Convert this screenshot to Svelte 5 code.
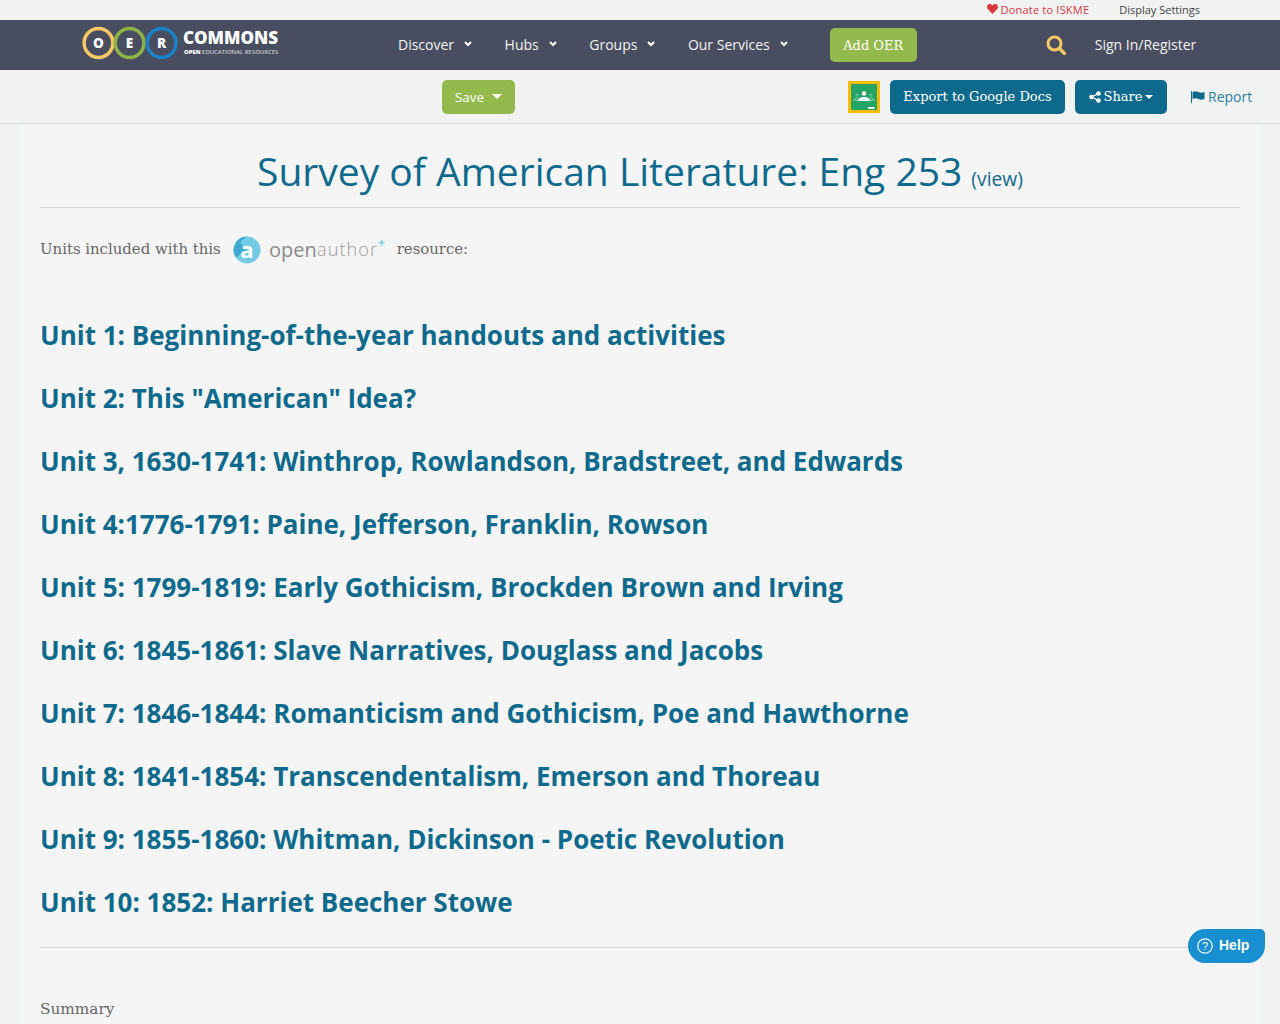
<script>
  const navItems = ["Discover", "Hubs", "Groups", "Our Services"];
  const units = [
    'Unit 1: Beginning-of-the-year handouts and activities',
    'Unit 2: This "American" Idea?',
    'Unit 3, 1630-1741: Winthrop, Rowlandson, Bradstreet, and Edwards',
    'Unit 4:1776-1791: Paine, Jefferson, Franklin, Rowson',
    'Unit 5: 1799-1819: Early Gothicism, Brockden Brown and Irving',
    'Unit 6: 1845-1861: Slave Narratives, Douglass and Jacobs',
    'Unit 7: 1846-1844: Romanticism and Gothicism, Poe and Hawthorne',
    'Unit 8: 1841-1854: Transcendentalism, Emerson and Thoreau',
    'Unit 9: 1855-1860: Whitman, Dickinson - Poetic Revolution',
    'Unit 10: 1852: Harriet Beecher Stowe'
  ];
  const rings = [
    { x: 18, color: "#f7c964", letter: "O" },
    { x: 50, color: "#8fb445", letter: "E" },
    { x: 83, color: "#1b82c5", letter: "R" }
  ];
</script>

<div class="topbar">
  <a class="donate" href="#donate">
    <svg viewBox="0 0 24 22" width="11" height="10"><path fill="#d9363e" d="M12 22 2 11.500C-1 8.300-.5 3.500 2.600 1.300 5.700-.8 9.800.2 12 3.500 14.200.2 18.300-.8 21.400 1.300c3.100 2.200 3.600 7 .6 10.200z" /></svg>
    Donate to ISKME
  </a>
  <a class="display" href="#display">Display Settings</a>
</div>

<header class="nav">
  <a class="logo" href="#home" aria-label="OER Commons">
    <svg width="210" height="36" viewBox="0 0 210 36">
      {#each rings as ring}
        <circle cx={ring.x} cy="18" r="14.800" fill="#484e60" stroke={ring.color} stroke-width="3.600" />
        <text x={ring.x} y="23" text-anchor="middle" class="ring-letter">{ring.letter}</text>
      {/each}
      <text x="105" y="19" class="logo-title">COMMONS</text>
      <text x="106" y="29" class="logo-sub"><tspan class="logo-open">OPEN</tspan> EDUCATIONAL RESOURCES</text>
    </svg>
  </a>
  <nav class="menu">
    {#each navItems as item}
      <a href="#menu">
        {item}
        <svg width="8" height="6" viewBox="0 0 8 6"><path d="M1 1l3 3 3-3" fill="none" stroke="#fff" stroke-width="2" /></svg>
      </a>
    {/each}
  </nav>
  <a class="btn add" href="#add">Add OER</a>
  <svg class="search" width="20" height="20" viewBox="0 0 20 20">
    <circle cx="8.500" cy="8.500" r="6.500" fill="none" stroke="#f7c964" stroke-width="3" />
    <path d="M13.500 13.500 18.500 18.500" stroke="#f7c964" stroke-width="3.400" stroke-linecap="round" />
  </svg>
  <a class="signin" href="#signin">Sign In/Register</a>
</header>

<div class="toolbar">
  <a class="btn save" href="#save">Save <span class="caret"></span></a>
  <a class="classroom" href="#classroom" aria-label="Google Classroom">
    <svg width="26" height="26" viewBox="0 0 26 26">
      <rect width="26" height="26" fill="#22a565" />
      <circle cx="6" cy="11" r="1.700" fill="#57bb8a" />
      <circle cx="20" cy="11" r="1.700" fill="#57bb8a" />
      <path d="M1.500 17c.5-2.500 2.500-3.500 4.500-3.500h14c2 0 4 1 4.500 3.500z" fill="#57bb8a" />
      <circle cx="13" cy="9.500" r="2.300" fill="#fff" />
      <path d="M7 17c.4-2.800 3-4 6-4s5.600 1.200 6 4z" fill="#fff" />
      <rect x="17" y="23" width="6.500" height="1.800" fill="#fff" />
    </svg>
  </a>
  <a class="btn dark export" href="#export">Export to Google Docs</a>
  <a class="btn dark share" href="#share">
    <svg width="12" height="12" viewBox="0 0 12 12" fill="#fff">
      <circle cx="2.500" cy="6" r="2.300" /><circle cx="9.500" cy="2.500" r="2.300" /><circle cx="9.500" cy="9.500" r="2.300" />
      <path d="M2.500 6 9.500 2.500M2.500 6l7 3.500" stroke="#fff" stroke-width="1.300" />
    </svg>
    Share <span class="caret small"></span>
  </a>
  <a class="report" href="#report">
    <svg width="14" height="12" viewBox="0 0 14 12"><path d="M.5 0v12" stroke="#0e6a8c" stroke-width="1" /><path fill="#0e6a8c" d="M1.500 1C4 0 5.500 0 7.500 1s3.500.8 6 0v7c-2.500 1-4 1-6 0s-3.500-.8-6 0z" /></svg>
    Report
  </a>
</div>

<main class="page">
  <div class="title">
    <h1>Survey of American Literature: Eng 253</h1>
    <a href="#view">(view)</a>
  </div>

  <div class="included">
    <span>Units included with this</span>
    <svg class="oa" width="152" height="32" viewBox="0 0 152 32">
      <circle cx="14" cy="16" r="13.500" fill="#74cbe4" />
      <path d="M14 2.500A13.500 13.500 0 0 0 3 23.500L13 16 7 8z" fill="#3fa9cf" />
      <text x="14" y="24" text-anchor="middle" class="oa-a">a</text>
      <text x="36" y="23" class="oa-open">open</text>
      <text x="84" y="22" textLength="60" lengthAdjust="spacing" class="oa-author">author</text>
      <text x="145" y="13" class="oa-plus">+</text>
    </svg>
    <span>resource:</span>
  </div>

  <ul class="units">
    {#each units as unit}
      <li><a href="#unit">{unit}</a></li>
    {/each}
  </ul>

  <h2 class="summary">Summary</h2>
</main>

<a class="help" href="#help">
  <svg width="16" height="16" viewBox="0 0 16 16">
    <circle cx="8" cy="8" r="7.200" fill="none" stroke="#fff" stroke-width="1.200" />
    <text x="8" y="12" text-anchor="middle" class="help-q">?</text>
  </svg>
  <span>Help</span>
</a>

<style>
  :global(body) {
    background: #f1f3f2;
    font-family: "Open Sans", sans-serif;
    overflow: hidden;
    height: 1024px;
  }

  a {
    text-decoration: none;
  }

  .topbar {
    height: 20px;
    box-sizing: border-box;
    padding-bottom: 2px;
    display: flex;
    justify-content: flex-end;
    align-items: center;
    gap: 30px;
    padding-right: 80px;
    font-size: 11px;
  }

  .donate {
    color: #d9363e;
    display: flex;
    align-items: center;
    gap: 3px;
    letter-spacing: 0.2px;
  }

  .display {
    color: #444;
  }

  .nav {
    height: 50px;
    background: #484e60;
    display: flex;
    align-items: center;
    padding-left: 81px;
    color: #fff;
  }

  .logo {
    display: flex;
    width: 204px;
    margin-bottom: 5px;
  }

  .ring-letter {
    font: 800 14px "Open Sans", sans-serif;
    fill: #fff;
  }

  .logo-title {
    font: 800 17.500px "Open Sans", sans-serif;
    fill: #fff;
  }

  .logo-sub {
    font: 600 6.100px "Open Sans", sans-serif;
    fill: #c8cbd3;
  }

  .logo-open {
    font-weight: 800;
    fill: #fff;
  }

  .menu {
    display: flex;
    gap: 32.500px;
    margin-left: 113px;
    padding-bottom: 2px;
    font-size: 14px;
  }

  .menu a {
    color: #f4f4f4;
    display: flex;
    align-items: center;
    gap: 10px;
  }

  .btn {
    display: flex;
    align-items: center;
    justify-content: center;
    height: 34px;
    border-radius: 5px;
    color: #fff;
    font-family: "DejaVu Serif", serif;
    font-size: 13px;
    box-sizing: border-box;
  }

  .add {
    background: #94ba4d;
    width: 87px;
    margin-left: 42px;
    font-size: 13px;
  }

  .search {
    margin-left: 129px;
  }

  .signin {
    color: #f4f4f4;
    font-size: 14px;
    margin-left: 29px;
    padding-bottom: 2px;
  }

  .toolbar {
    height: 53px;
    border-bottom: 1px solid #d8d8d8;
    display: flex;
    align-items: center;
    padding-left: 442px;
    box-sizing: content-box;
  }

  .save {
    background: #94ba4d;
    width: 73px;
    gap: 8px;
    font-family: "Open Sans", sans-serif;
    font-size: 13.500px;
  }

  .caret {
    width: 0;
    height: 0;
    border: 5px solid transparent;
    border-top-color: #fff;
    border-bottom: 0;
  }

  .caret.small {
    border-width: 4px;
    border-bottom: 0;
  }

  .classroom {
    display: flex;
    border: 3px solid #fbbc04;
    margin-left: 333px;
  }

  .dark {
    background: #0e6a8c;
  }

  .export {
    width: 175px;
    margin-left: 10px;
    font-size: 13px;
  }

  .share {
    width: 92px;
    margin-left: 10px;
    gap: 3px;
    font-size: 13px;
  }

  .report {
    margin-left: 24px;
    color: #2f7f9d;
    font-size: 14px;
    display: flex;
    align-items: center;
    gap: 3px;
  }

  .page {
    margin: 0 20px;
    padding: 0 20px;
    background: #f5f5f5;
    height: 900px;
    box-sizing: border-box;
    overflow: hidden;
  }

  .title {
    display: flex;
    justify-content: center;
    align-items: baseline;
    gap: 9px;
    height: 84px;
    box-sizing: border-box;
    padding-top: 19px;
    border-bottom: 1px solid #d4d4d4;
    color: #0e6a8c;
  }

  .title h1 {
    margin: 0;
    font-size: 39px;
    font-weight: 400;
    line-height: 55px;
  }

  .title a {
    color: #0e6a8c;
    font-size: 19.300px;
  }

  .included {
    display: flex;
    align-items: center;
    height: 32px;
    margin-top: 26px;
    color: #666;
    font-family: "DejaVu Serif", serif;
    font-size: 14.900px;
  }

  .included span {
    margin-bottom: 2px;
  }

  .oa {
    margin: 0 12px;
  }

  .oa-a {
    font: 700 22px "Open Sans", sans-serif;
    fill: #fff;
  }

  .oa-open {
    font: 400 20px "Open Sans", sans-serif;
    fill: #8a8a8a;
  }

  .oa-author {
    font: 300 18px "Open Sans", sans-serif;
    fill: #9a9a9a;
  }

  .oa-plus {
    font: 700 12px "Open Sans", sans-serif;
    fill: #74cbe4;
  }

  .units {
    list-style: none;
    margin: 0;
    padding: 37px 0 14px;
    border-bottom: 1px solid #d4d4d4;
  }

  .units li {
    height: 63px;
    display: flex;
    align-items: center;
  }

  .units a {
    color: #0e6a8c;
    font-size: 26px;
    font-weight: 700;
  }

  .summary {
    margin: 52px 0 0;
    color: #666;
    font-family: "DejaVu Serif", serif;
    font-size: 15.300px;
    font-weight: 400;
  }

  .help {
    position: fixed;
    left: 1188px;
    top: 929px;
    width: 77px;
    height: 34px;
    box-sizing: border-box;
    padding-left: 9px;
    display: flex;
    align-items: center;
    gap: 6px;
    background: #178fd0;
    color: #fff;
    font: 700 14px "Liberation Sans", sans-serif;
    border-radius: 17px 5px 17px 17px;
  }

  .help span {
    margin-bottom: 2px;
  }

  .help-q {
    font: 400 11px "Liberation Sans", sans-serif;
    fill: #fff;
  }
</style>
